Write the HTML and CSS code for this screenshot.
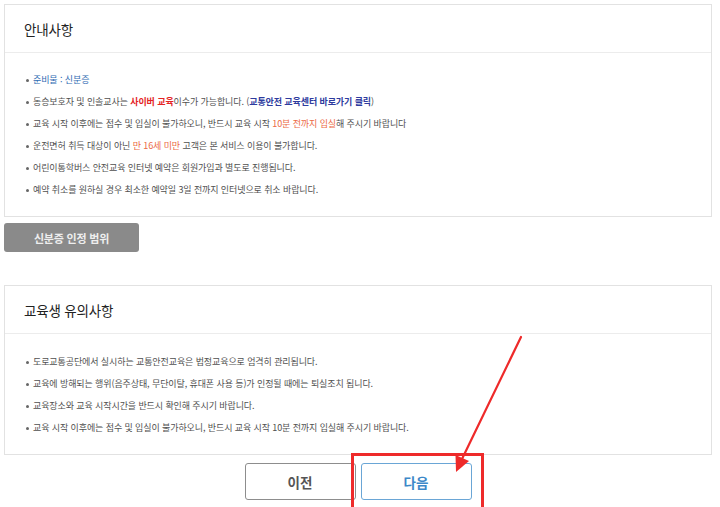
FILE: index.html
```html
<!DOCTYPE html>
<html lang="ko">
<head>
<meta charset="utf-8">
<title>안내사항</title>
<link rel="stylesheet" href="styles.css">
</head>
<body>
<div class="page">
  <section class="panel">
    <h2 class="panel-title">안내사항</h2>
    <ul class="notes">
      <li><span class="c-blue">준비물 : 신분증</span></li>
      <li>동승보호자 및 인솔교사는 <b class="c-red">사이버 교육</b>이수가 가능합니다. (<b class="c-navy">교통안전 교육센터 바로가기 클릭</b>)</li>
      <li>교육 시작 이후에는 접수 및 입실이 불가하오니, 반드시 교육 시작 <span class="c-orange">10분 전까지 입실</span>해 주시기 바랍니다</li>
      <li>운전면허 취득 대상이 아닌 <span class="c-orange">만 16세 미만</span> 고객은 본 서비스 이용이 불가합니다.</li>
      <li>어린이통학버스 안전교육 인터넷 예약은 회원가입과 별도로 진행됩니다.</li>
      <li>예약 취소를 원하실 경우 최소한 예약일 3일 전까지 인터넷으로 취소 바랍니다.</li>
    </ul>
  </section>

  <button class="id-btn" type="button">신분증 인정 범위</button>

  <section class="panel panel-second">
    <h2 class="panel-title">교육생 유의사항</h2>
    <ul class="notes">
      <li>도로교통공단에서 실시하는 교통안전교육은 법정교육으로 엄격히 관리됩니다.</li>
      <li>교육에 방해되는 행위(음주상태, 무단이탈, 휴대폰 사용 등)가 인정될 때에는 퇴실조치 됩니다.</li>
      <li>교육장소와 교육 시작시간을 반드시 확인해 주시기 바랍니다.</li>
      <li>교육 시작 이후에는 접수 및 입실이 불가하오니, 반드시 교육 시작 10분 전까지 입실해 주시기 바랍니다.</li>
    </ul>
  </section>

  <div class="actions">
    <button class="btn btn-prev" type="button">이전</button>
    <button class="btn btn-next" type="button">다음</button>
  </div>

  <div class="highlight"></div>
  <svg class="arrow" width="720" height="507" viewBox="0 0 720 507" aria-hidden="true">
    <line x1="521" y1="337" x2="462" y2="459" stroke="#ee2a2a" stroke-width="2.2" stroke-linecap="round"/>
    <polygon points="456,472 455.5,455 469,461" fill="#ee2a2a"/>
  </svg>
</div>
</body>
</html>
```

FILE: styles.css
```css
* { box-sizing: border-box; }

html, body {
  margin: 0;
  padding: 0;
  background: #ffffff;
}

body {
  font-family: "Noto Sans CJK KR", "Noto Sans", sans-serif;
  color: #555555;
}

.page {
  position: relative;
  width: 720px;
  height: 507px;
  padding: 4px 8px 0 4px;
  overflow: hidden;
}

.panel {
  width: 708px;
  border: 1px solid #e2e2e2;
  background: #ffffff;
}

.panel-second {
  margin-top: 33px;
}

.panel-title {
  margin: 0;
  height: 48px;
  padding-left: 19px;
  line-height: 49px;
  font-size: 13.5px;
  font-weight: 400;
  color: #222222;
  border-bottom: 1px solid #ececec;
  letter-spacing: -0.2px;
}

.notes {
  list-style: none;
  margin: 0;
  padding: 16px 0 15px 21px;
}

.panel-second .notes {
  padding-top: 17px;
}

.notes li {
  position: relative;
  padding-left: 7px;
  height: 22px;
  line-height: 22px;
  font-size: 9px;
  letter-spacing: -0.1px;
  color: #505050;
  white-space: nowrap;
}

.notes li::before {
  content: "";
  position: absolute;
  left: 0;
  top: 10px;
  width: 3px;
  height: 3px;
  border-radius: 50%;
  background: #666666;
}

.notes b { font-weight: 700; }

.c-blue { color: #2f6bb3; }
.c-red { color: #e42424; }
.c-navy { color: #2e3b9e; }
.c-orange { color: #ec6a45; }

.id-btn {
  display: block;
  margin-top: 6px;
  width: 135px;
  height: 29px;
  padding: 0;
  border: none;
  border-radius: 3px;
  background: #8a8a8a;
  color: #eeeeee;
  font-family: "Noto Sans CJK KR", "Noto Sans", sans-serif;
  font-size: 11px;
  font-weight: 700;
  letter-spacing: -0.2px;
}

.actions {
  width: 708px;
  display: flex;
  justify-content: center;
  gap: 5px;
  margin-top: 8px;
}

.btn {
  width: 111px;
  height: 37px;
  padding: 0;
  border-radius: 3px;
  background: #ffffff;
  font-family: "Noto Sans CJK KR", "Noto Sans", sans-serif;
  font-size: 13.5px;
  font-weight: 700;
}

.btn-prev {
  border: 1px solid #8d8d8d;
  color: #555555;
}

.btn-next {
  border: 1px solid #6aa6d6;
  color: #3d88c8;
}

.highlight {
  position: absolute;
  left: 351px;
  top: 453px;
  width: 133px;
  height: 60px;
  border: 3.5px solid #ee2a2a;
}

.arrow {
  position: absolute;
  left: 0;
  top: 0;
  pointer-events: none;
}
```
